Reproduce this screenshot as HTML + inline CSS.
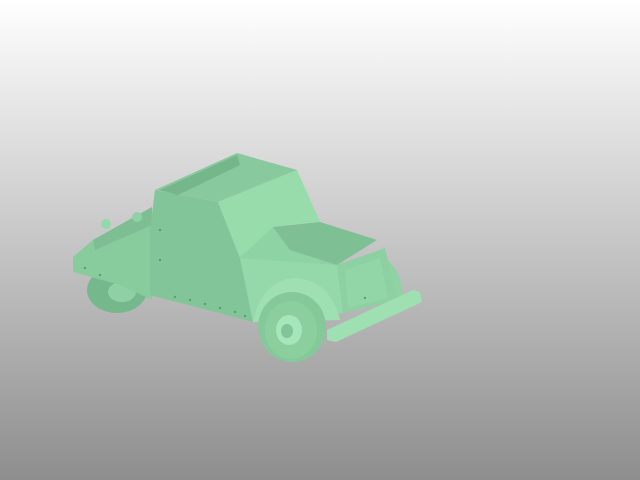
<!DOCTYPE html>
<html><head><meta charset="utf-8"><style>
html,body{margin:0;padding:0;width:640px;height:480px;overflow:hidden}
body{background:linear-gradient(#ffffff 0%,#8e8e8e 100%)}
svg{position:absolute;left:0;top:0}
</style></head><body>
<svg width="640" height="480" viewBox="0 0 640 480">
<!-- rear wheel -->
<ellipse cx="117" cy="290" rx="30" ry="23" fill="#75b88b"/>
<ellipse cx="122" cy="292" rx="14" ry="10" fill="#8fd0a4"/>
<!-- rear body -->
<polygon points="73,257 93,240 152,207 152,300 120,285 73,272" fill="#88cc9e"/>
<polygon points="93,240 152,207 152,225 95,250" fill="#7dbf93"/>
<circle cx="106" cy="224" r="5" fill="#94d8aa"/>
<circle cx="137" cy="217" r="5" fill="#8fd2a5"/>
<!-- cabin side -->
<polygon points="155,190 218,202 240,258 253,322 150,295 150,230" fill="#82c598"/>
<!-- open top -->
<polygon points="155,190 237,153 297,170 218,202" fill="#88ca9d"/>
<polygon points="160,190 237,155 240,165 178,195" fill="#75b78a"/>
<!-- cabin front face -->
<polygon points="218,202 297,170 320,222 273,227 240,258" fill="#98dcac"/>
<!-- hood top -->
<polygon points="240,258 273,227 320,222 377,240 337,265" fill="#7fbf94"/>
<polygon points="240,258 273,227 290,250 337,265" fill="#8ed3a3"/>
<!-- hood side -->
<polygon points="240,258 337,265 343,313 253,322" fill="#95d8a9"/>
<!-- rear fender right -->
<path d="M380,255 Q405,270 402,300 L385,300 Z" fill="#8fd2a4"/>
<!-- grille -->
<polygon points="337,265 385,248 393,283 398,300 343,313" fill="#8dd0a2"/>
<polygon points="345,270 380,258 388,298 348,308" fill="#92d6a7"/>
<!-- front fender -->
<path d="M253,322 Q262,280 295,278 Q330,280 340,320 Z" fill="#9ee0b2"/>
<!-- front wheel -->
<ellipse cx="292" cy="327" rx="34" ry="35" fill="#85c99b"/>
<ellipse cx="291" cy="330" rx="26" ry="29" fill="#8ccf9f"/>
<ellipse cx="289" cy="330" rx="13" ry="15" fill="#a6e6ba"/>
<ellipse cx="287" cy="331" rx="6" ry="7" fill="#82c597"/>
<!-- bumper -->
<polygon points="327,330 413,290 420,292 422,302 336,342 327,340" fill="#9ee0b2"/>
<!-- rivets -->
<g fill="#5f9c73">
<circle cx="160" cy="230" r="1.2"/><circle cx="160" cy="260" r="1.2"/><circle cx="175" cy="297" r="1.2"/>
<circle cx="190" cy="300" r="1.2"/><circle cx="205" cy="304" r="1.2"/><circle cx="220" cy="308" r="1.2"/>
<circle cx="235" cy="312" r="1.2"/><circle cx="245" cy="316" r="1.2"/><circle cx="100" cy="275" r="1.2"/><circle cx="85" cy="268" r="1.2"/>
<circle cx="365" cy="298" r="1.2"/>
</g>
</svg>
</body></html>
